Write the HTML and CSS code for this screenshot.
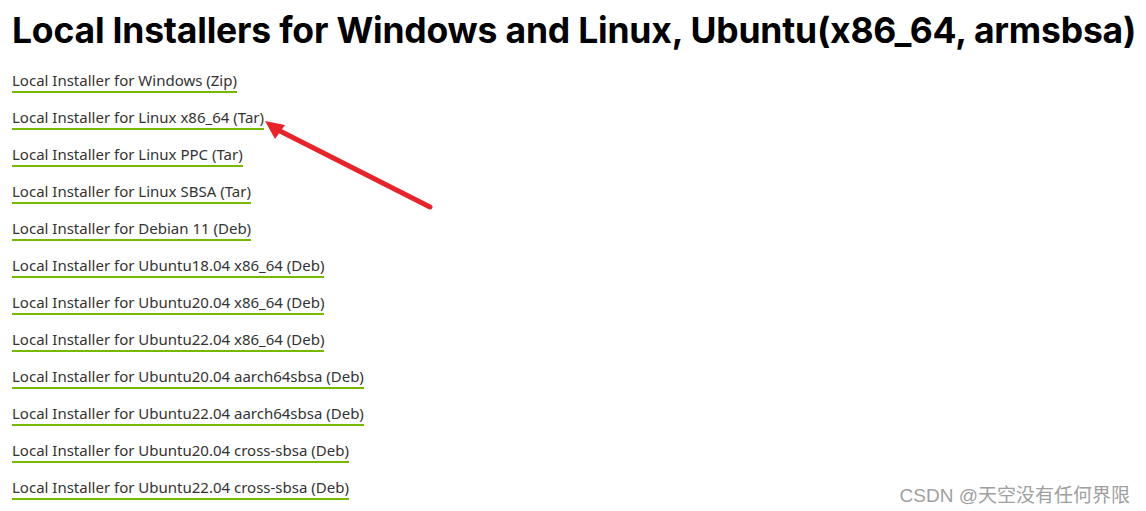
FILE: index.html
```html
<!DOCTYPE html>
<html lang="en">
<head>
<meta charset="utf-8">
<link rel="stylesheet" href="styles.css">
</head>
<body>
<div class="page">
  <h1 class="title">Local Installers for Windows and Linux, Ubuntu(x86_64, armsbsa)</h1>
  <ul class="links">
    <li><a class="link" href="#">Local Installer for Windows (Zip)</a></li>
    <li><a class="link" href="#">Local Installer for Linux x86_64 (Tar)</a></li>
    <li><a class="link" href="#">Local Installer for Linux PPC (Tar)</a></li>
    <li><a class="link" href="#">Local Installer for Linux SBSA (Tar)</a></li>
    <li><a class="link" href="#">Local Installer for Debian 11 (Deb)</a></li>
    <li><a class="link" href="#">Local Installer for Ubuntu18.04 x86_64 (Deb)</a></li>
    <li><a class="link" href="#">Local Installer for Ubuntu20.04 x86_64 (Deb)</a></li>
    <li><a class="link" href="#">Local Installer for Ubuntu22.04 x86_64 (Deb)</a></li>
    <li><a class="link" href="#">Local Installer for Ubuntu20.04 aarch64sbsa (Deb)</a></li>
    <li><a class="link" href="#">Local Installer for Ubuntu22.04 aarch64sbsa (Deb)</a></li>
    <li><a class="link" href="#">Local Installer for Ubuntu20.04 cross-sbsa (Deb)</a></li>
    <li><a class="link" href="#">Local Installer for Ubuntu22.04 cross-sbsa (Deb)</a></li>
  </ul>
  <svg class="arrow" width="200" height="110" viewBox="0 0 200 110">
    <line x1="168" y1="87" x2="14" y2="9" stroke="#e8242b" stroke-width="5" stroke-linecap="round"/>
    <polygon points="3,1 23,5 13,19" fill="#e8242b"/>
  </svg>
  <div class="watermark">CSDN @天空没有任何界限</div>
</div>
</body>
</html>
```

FILE: styles.css
```css
html, body {
  margin: 0;
  padding: 0;
  background: #ffffff;
}
.page {
  position: relative;
  padding: 8px 12px 0 12px;
  height: 503px;
  overflow: hidden;
}
.title {
  margin: 0;
  font-family: Inter, "Noto Sans", sans-serif;
  font-weight: 700;
  font-size: 35.5px;
  line-height: 46px;
  color: #000;
  letter-spacing: -0.2px;
  white-space: nowrap;
}
.links {
  list-style: none;
  margin: 17px 0 0 0;
  padding: 0;
}
.links li {
  height: 37px;
}
.link {
  display: inline-block;
  font-family: "Noto Sans", "Open Sans", sans-serif;
  font-size: 15px;
  line-height: 19px;
  color: #333333;
  text-decoration: none;
  border-bottom: 2px solid #76b900;
  padding-bottom: 1px;
}
.arrow {
  position: absolute;
  left: 262px;
  top: 120px;
}
.watermark {
  position: absolute;
  right: 16px;
  top: 480px;
  font-family: "Liberation Sans", "Noto Sans CJK SC", sans-serif;
  font-size: 19px;
  color: #a0a0a0;
}
```
